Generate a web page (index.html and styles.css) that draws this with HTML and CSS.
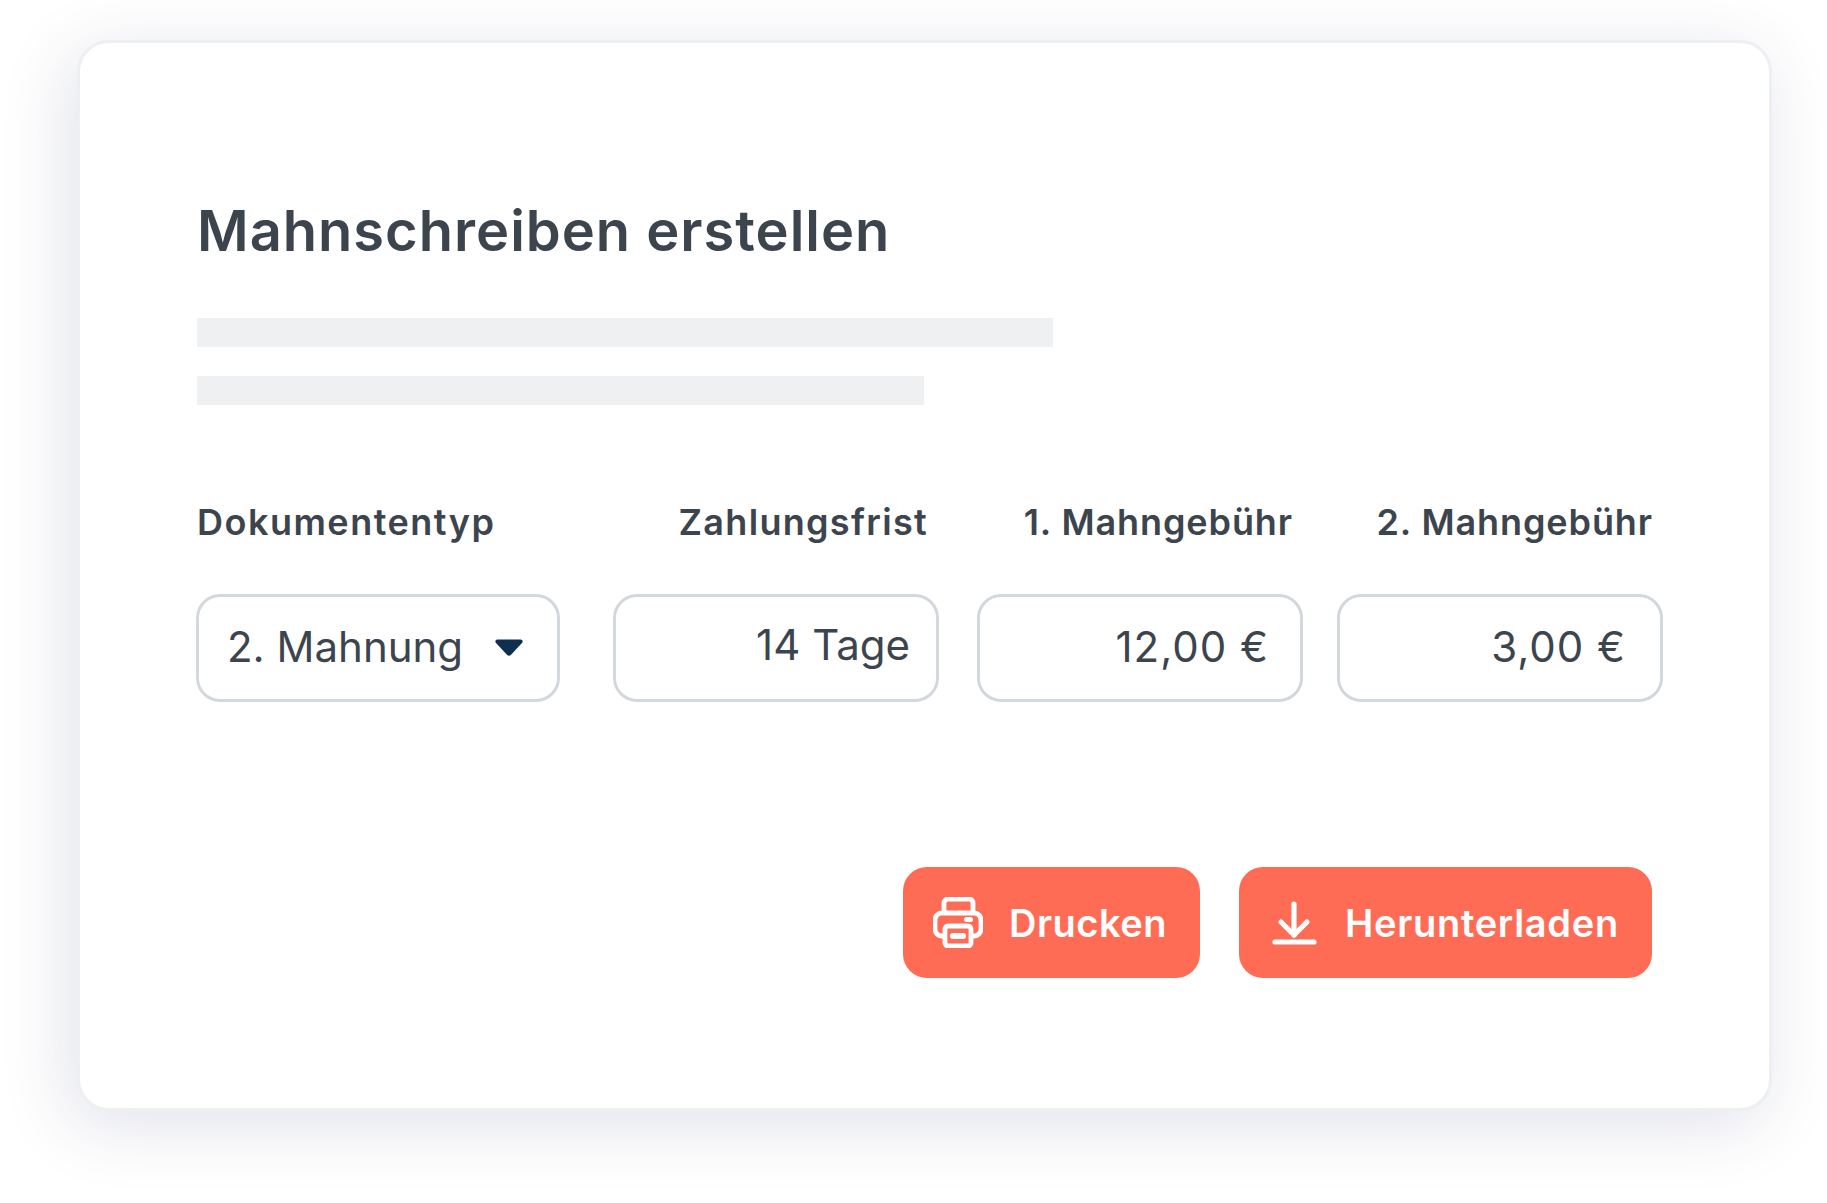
FILE: index.html
```html
<!DOCTYPE html>
<html lang="de">
<head>
    <meta charset="UTF-8">
    <meta name="viewport" content="width=device-width, initial-scale=1.0">
    <title>Mahnschreiben erstellen</title>
    <link rel="stylesheet" href="styles.css">
</head>
<body>
    <div class="card">
        <h1 class="title">Mahnschreiben erstellen</h1>

        <div class="placeholder placeholder-long"></div>
        <div class="placeholder placeholder-short"></div>

        <div class="fields">
            <div class="field field-type">
                <div class="label">Dokumententyp</div>
                <div class="input input-select">
                    <span>2. Mahnung</span>
                    <svg class="caret" width="28" height="17" viewBox="0 0 28 17"><path d="M2.5 0.5H25.5C27.5 0.5 28.3 2.4 27 4L15.8 16C14.8 17 13.2 17 12.2 16L1 4C-0.3 2.4 0.5 0.5 2.5 0.5Z" fill="#0e2f4f"/></svg>
                </div>
            </div>
            <div class="field field-term">
                <div class="label">Zahlungsfrist</div>
                <div class="input input-term">14 Tage</div>
            </div>
            <div class="field field-fee field-fee-one">
                <div class="label">1. Mahngebühr</div>
                <div class="input input-fee-one">12,00 €</div>
            </div>
            <div class="field field-fee field-fee-two">
                <div class="label">2. Mahngebühr</div>
                <div class="input input-fee-two">3,00 €</div>
            </div>
        </div>

        <div class="actions">
            <button class="btn btn-print">
                <svg width="50" height="51" viewBox="0 0 50 51" fill="none" stroke="#fff" stroke-width="4.8" stroke-linejoin="round">
                    <path d="M11 15V6a4 4 0 0 1 4-4h21a4 4 0 0 1 4 4v9"/>
                    <path d="M11 39H9a7 7 0 0 1-7-7V23a7 7 0 0 1 7-7h32a7 7 0 0 1 7 7v9a7 7 0 0 1-7 7h-2"/>
                    <rect x="12" y="29" width="26" height="20" rx="3"/>
                    <rect x="17" y="36" width="16" height="6" rx="3" fill="#fff" stroke="none"/>
                    <rect x="31" y="20" width="9" height="5" rx="2.5" fill="#fff" stroke="none"/>
                </svg>
                Drucken
            </button>
            <button class="btn btn-download">
                <svg width="45" height="44" viewBox="0 0 45 44" fill="none" stroke="#fff" stroke-width="5.2" stroke-linecap="round" stroke-linejoin="round">
                    <path d="M22 3V34"/>
                    <path d="M9 21L22 34L35 21"/>
                    <path d="M3 41H42"/>
                </svg>
                Herunterladen
            </button>
        </div>
    </div>
</body>
</html>
```

FILE: styles.css
```css
* {
    margin: 0;
    padding: 0;
    box-sizing: border-box;
}

body {
    font-family: Inter, 'Liberation Sans', sans-serif;
    background: #fff;
    color: #3c444e;
    padding: 40px 55px 92px 77px;
    height: 1203px;
    overflow: hidden;
}

.card {
    width: 1695px;
    height: 1071px;
    background: #fff;
    border: 3px solid #eeeff2;
    border-radius: 32px;
    box-shadow: -8px 14px 70px rgba(40, 50, 100, 0.14);
    padding: 156px 0 0 117px;
}

.title {
    font-size: 56px;
    line-height: 64px;
    font-weight: 600;
    letter-spacing: 1px;
    margin-bottom: 55px;
}

.placeholder {
    height: 29px;
    background: #eff0f2;
}

.placeholder-long {
    width: 856px;
    margin-bottom: 29px;
}

.placeholder-short {
    width: 727px;
}

.fields {
    display: flex;
    margin-top: 95px;
    margin-left: -1px;
}

.field {
    width: 326px;
}

.field-type {
    width: 364px;
}

.field-term {
    margin-left: 53px;
}

.field-fee-one {
    margin-left: 38px;
}

.field-fee-two {
    margin-left: 34px;
}

.label {
    font-size: 36px;
    line-height: 44px;
    font-weight: 600;
    letter-spacing: 1.3px;
    text-align: right;
    padding-right: 11px;
    margin-bottom: 50px;
}

.field-type .label {
    text-align: left;
    padding-left: 1px;
    letter-spacing: 1.5px;
}

.field-fee .label {
    letter-spacing: 0.9px;
    padding-right: 10px;
}

.input {
    height: 108px;
    border: 3px solid #d3d8df;
    border-radius: 24px;
    font-size: 42px;
    display: flex;
    align-items: center;
    justify-content: flex-end;
    padding-bottom: 4px;
}

.input-select {
    justify-content: space-between;
    padding: 0 34px 4px 28px;
}

.input-select .caret {
    margin-top: 2px;
}

.input-term {
    padding: 0 26px 8px 0;
}

.input-fee-one {
    letter-spacing: 1px;
    padding-right: 31px;
}

.input-fee-two {
    letter-spacing: 1px;
    padding-right: 34px;
}

.actions {
    display: flex;
    justify-content: flex-end;
    gap: 39px;
    margin-top: 165px;
    padding-right: 117px;
}

.btn {
    height: 111px;
    border: none;
    border-radius: 24px;
    background: #ff6c55;
    color: #fff;
    font-family: inherit;
    font-size: 38px;
    font-weight: 600;
    letter-spacing: 0.5px;
    display: flex;
    align-items: center;
    gap: 26px;
}

.btn-print {
    width: 297px;
    padding-left: 30px;
}

.btn-download {
    width: 413px;
    padding-left: 33px;
    gap: 28px;
    letter-spacing: 0.7px;
}
```
